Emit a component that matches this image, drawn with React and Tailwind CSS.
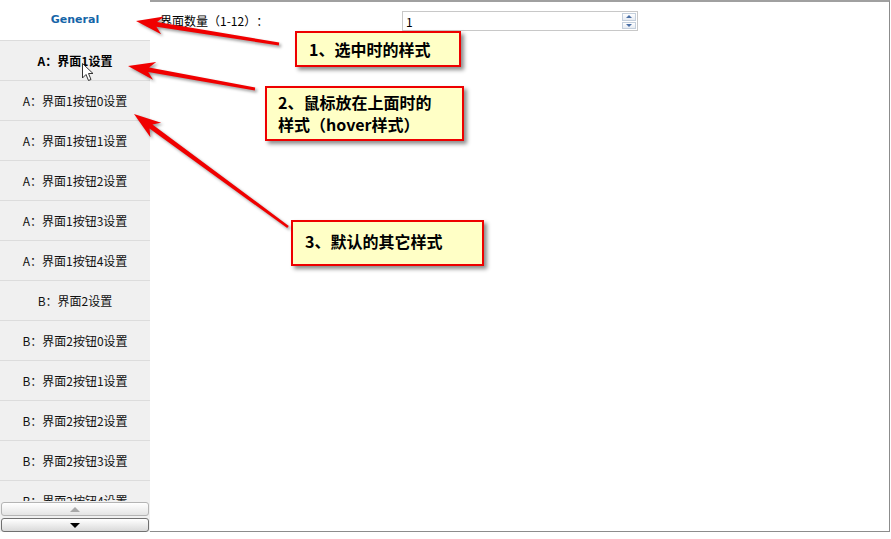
import { useState } from 'react';

const items = [
  'General',
  'A：界面1设置',
  'A：界面1按钮0设置',
  'A：界面1按钮1设置',
  'A：界面1按钮2设置',
  'A：界面1按钮3设置',
  'A：界面1按钮4设置',
  'B：界面2设置',
  'B：界面2按钮0设置',
  'B：界面2按钮1设置',
  'B：界面2按钮2设置',
  'B：界面2按钮3设置',
  'B：界面2按钮4设置',
];

// red annotation arrow, tip first
const arrowPoints = (tip, tail) => {
  const dx = tail[0] - tip[0];
  const dy = tail[1] - tip[1];
  const len = Math.hypot(dx, dy);
  const ux = dx / len;
  const uy = dy / len;
  const nx = -uy;
  const ny = ux;
  const at = (d, w) => [tip[0] + ux * d + nx * w, tip[1] + uy * d + ny * w];
  const pts = [
    tip,
    at(27, 9),
    at(21, 2.4),
    at(len, 1.4),
    at(len, -1.4),
    at(21, -2.4),
    at(27, -9),
  ];
  return pts.map((p) => p.map((v) => v.toFixed(1)).join(',')).join(' ');
};

const arrows = [
  { tip: [136, 21], tail: [279, 44] },
  { tip: [128, 66], tail: [255, 89] },
  { tip: [134, 114], tail: [288, 227] },
];

const Callout = ({ className, children }) => (
  <div
    className={`absolute border-2 border-[#ee0000] bg-[#ffffc6] shadow-[3px_3px_4px_rgba(0,0,0,0.45)] text-[16px] font-bold leading-[22px] text-black ${className}`}
    style={{ fontFamily: '"Noto Sans CJK SC", sans-serif' }}
  >
    {children}
  </div>
);

const App = () => {
  const [active, setActive] = useState(0);
  const [count, setCount] = useState(1);

  return (
    <div
      className="relative w-[891px] h-[539px] bg-white overflow-hidden [text-spacing-trim:space-all]"
      style={{ fontFamily: '"Liberation Sans", "Noto Sans CJK SC", sans-serif' }}
    >
      <div className="flex w-[890px] h-[532px]">
        {/* Sidebar */}
        <div className="w-[150px] h-full flex flex-col bg-[#f0f0f0]">
          <div className="h-[501px] overflow-hidden">
            {items.map((label, i) => (
              <div
                key={label}
                onClick={() => setActive(i)}
                className={`flex items-center justify-center border-b border-[#dcdcdc] text-[12px] cursor-pointer ${
                  i === 0 ? 'h-[41px]' : 'h-[40px]'
                } ${
                  i === active
                    ? 'bg-white text-[#1565a8] font-bold'
                    : i === 1
                    ? 'font-bold text-black'
                    : 'text-[#111]'
                }`}
                style={{ fontFamily: i === 0 ? '"DejaVu Sans", sans-serif' : '"Noto Sans CJK SC", sans-serif' }}
              >
                <span className={i === 0 ? 'text-[11px]' : ''}>{label}</span>
              </div>
            ))}
          </div>
          <div className="flex flex-col gap-[2px] px-[1px] pt-[1px]">
            <button className="h-[14px] rounded-[3px] border border-[#b4b4b4] bg-gradient-to-b from-white to-[#e4e4e4] flex items-center justify-center">
              <span className="w-0 h-0 border-l-[5px] border-r-[5px] border-b-[5px] border-l-transparent border-r-transparent border-b-[#a8a8a8]" />
            </button>
            <button className="h-[14px] rounded-[3px] border border-[#707070] bg-gradient-to-b from-white to-[#dadada] flex items-center justify-center">
              <span className="w-0 h-0 border-l-[5px] border-r-[5px] border-t-[5px] border-l-transparent border-r-transparent border-t-black" />
            </button>
          </div>
        </div>

        {/* Content */}
        <div className="flex-1 h-full border-t-2 border-r border-b border-[#8c8c8c] border-t-[#a0a0a0]">
          <div className="flex items-center h-[20px] mt-[9px] pl-[10px]">
            <span
              className="w-[242px] text-[12px] text-black"
              style={{ fontFamily: '"Noto Sans CJK SC", sans-serif' }}
            >
              界面数量（1-12）：
            </span>
            <div className="relative w-[236px] h-[20px] border border-[#c8c8c8] flex items-center">
              <input
                value={count}
                onChange={(e) => setCount(e.target.value)}
                className="w-full h-full pl-[3px] text-[12px] outline-none bg-transparent"
                style={{ fontFamily: '"Noto Sans CJK SC", sans-serif' }}
              />
              <div className="absolute right-[1px] top-[1px] w-[14px] h-[16px] flex flex-col gap-[1px]">
                <div className="flex-1 border border-[#c4cfdc] bg-gradient-to-b from-white to-[#e6ebf2] flex items-center justify-center">
                  <span className="w-0 h-0 border-l-[3px] border-r-[3px] border-b-[3px] border-l-transparent border-r-transparent border-b-[#4a6fa5]" />
                </div>
                <div className="flex-1 border border-[#c4cfdc] bg-gradient-to-b from-white to-[#e6ebf2] flex items-center justify-center">
                  <span className="w-0 h-0 border-l-[3px] border-r-[3px] border-t-[3px] border-l-transparent border-r-transparent border-t-[#4a6fa5]" />
                </div>
              </div>
            </div>
          </div>
        </div>
      </div>

      {/* Annotation callouts */}
      <Callout className="left-[295px] top-[31px] w-[166px] h-[36px] pl-[12px] pt-[5px]">1、选中时的样式</Callout>
      <Callout className="left-[265px] top-[86px] w-[199px] h-[55px] pl-[11px] pt-[3px]">
        2、鼠标放在上面时的
        <br />
        样式（hover样式）
      </Callout>
      <Callout className="left-[291px] top-[220px] w-[193px] h-[46px] pl-[12px] pt-[8px]">3、默认的其它样式</Callout>

      {/* Arrows and cursor */}
      <svg className="absolute inset-0 pointer-events-none" width="891" height="539">
        <g style={{ filter: 'drop-shadow(2px 2px 1.5px rgba(0,0,0,0.4))' }}>
          {arrows.map((a, i) => (
            <polygon key={i} points={arrowPoints(a.tip, a.tail)} fill="#f00000" />
          ))}
        </g>
        <path
          d="M82.5 63.5 L82.5 78 L86 74.5 L88.5 80.5 L91 79.5 L88.5 73.5 L93 73.5 Z"
          fill="white"
          stroke="#333"
          strokeWidth="1"
          strokeLinejoin="round"
        />
      </svg>
    </div>
  );
};

export default App;
